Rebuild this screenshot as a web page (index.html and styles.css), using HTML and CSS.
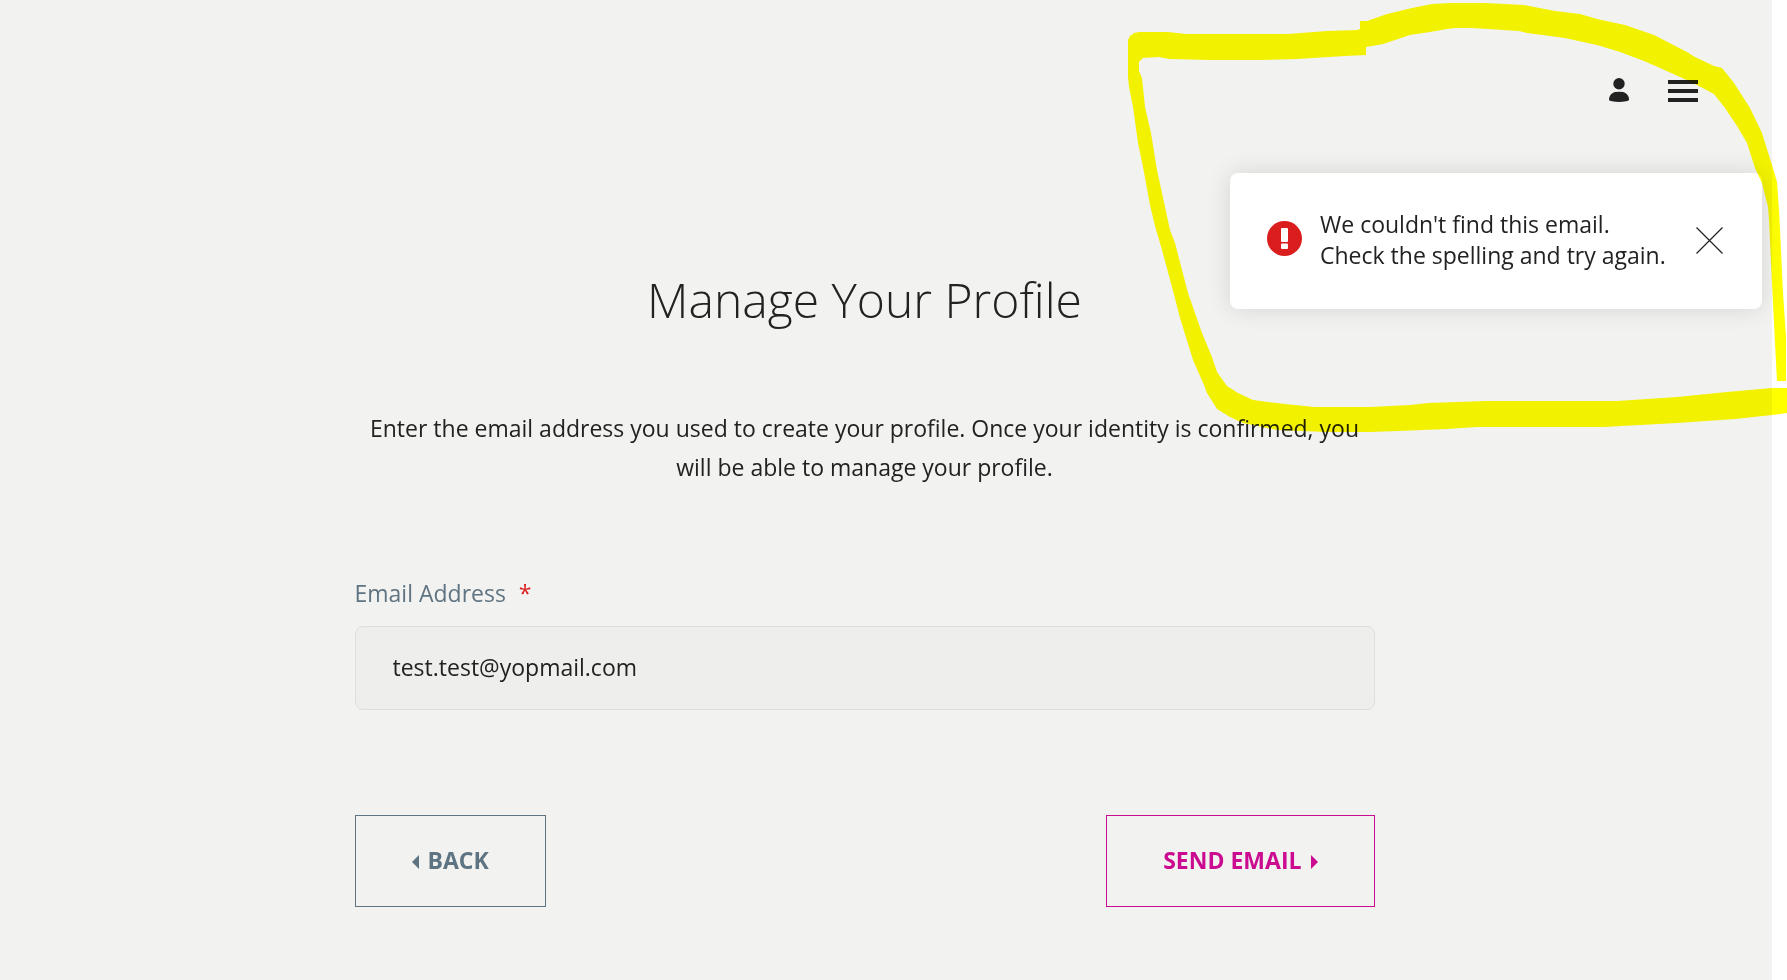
FILE: index.html
```html
<!DOCTYPE html>
<html lang="en">
<head>
<meta charset="utf-8">
<title>Manage Your Profile</title>
<link rel="stylesheet" href="styles.css">
</head>
<body>
<div class="page">
  <header class="header">
    <button class="icon-button" type="button" aria-label="Account">
      <svg width="20" height="24" viewBox="0 0 20 24"><circle cx="10" cy="5.700" r="5.700"/><path d="M6 14 Q10 13.700 14 14 C18 15 20 18.500 20 21.500 C20 22.600 18.500 23 17 23.300 Q10 24.600 3 23.300 C1.500 23 0 22.600 0 21.500 C0 18.500 2 15 6 14Z"/></svg>
    </button>
    <button class="icon-button" type="button" aria-label="Menu">
      <svg width="30" height="22" viewBox="0 0 30 22"><path d="M0 0h30v4H0zM0 9h30v4H0zM0 18h30v4H0z"/></svg>
    </button>
  </header>

  <main class="main">
    <h1 class="title">Manage Your Profile</h1>
    <p class="intro">Enter the email address you used to create your profile. Once your identity is confirmed, you will be able to manage your profile.</p>
    <form class="form">
      <label class="label" for="email">Email Address <span class="required">*</span></label>
      <input class="input" id="email" type="email" value="test.test@yopmail.com" required>
      <div class="actions">
        <button class="button" type="button">
          <svg class="arrow" width="7" height="14" viewBox="0 0 7 14"><path d="M7 0v14L0 7z"/></svg>
          BACK
        </button>
        <button class="button button-primary" type="submit">
          SEND EMAIL
          <svg class="arrow" width="7" height="14" viewBox="0 0 7 14"><path d="M0 0v14l7-7z"/></svg>
        </button>
      </div>
    </form>
  </main>

  <div class="toast" role="alert">
    <svg class="toast-icon" width="35" height="35" viewBox="0 0 35 35"><circle cx="17.500" cy="17.500" r="17.500" fill="#da1e1e"/><rect x="14" y="7" width="7" height="14" rx="1" fill="#fff"/><rect x="14" y="22.500" width="7" height="5.500" rx="1" fill="#fff"/></svg>
    <p class="toast-text">We couldn't find this email.<br>Check the spelling and try again.</p>
    <button class="icon-button toast-close" type="button" aria-label="Close">
      <svg width="27" height="27" viewBox="0 0 27 27"><path d="M.5.5l26 26M26.500.5l-26 26" fill="none" stroke="#222" stroke-width="1.200"/></svg>
    </button>
  </div>
</div>

<svg class="marker" width="659" height="440" viewBox="1128 0 659 440" aria-hidden="true"><path d="M1128 40L1130 36L1134 33L1139 32L1168 32L1186 34L1288 34L1327 31L1357 30L1360 29V21H1367L1387 14L1412 8L1432 4L1450 3L1485 3L1524 5L1555 11L1580 14L1597 19L1625 25L1654 35L1687 52L1695 57L1714 66L1722 68L1734 83L1750 108L1762 133L1772 165L1777 182L1779 210L1780 230L1783 293L1786 337V381H1777L1775 343L1772 283L1769 220L1768 207L1762 183L1755 168L1747 143L1737 126L1725 108L1714 94L1697 85L1680 77L1660 68L1644 61L1620 52L1597 45L1565 38L1527 33L1519 31L1472 28H1455L1447 29L1430 32L1410 35L1383 44L1372 46L1366 47V55L1345 56L1297 59L1257 60H1211L1169 59L1159 57L1143 58L1139 62V71L1142 78L1145 107L1151 133L1157 170L1170 230L1175 243L1188 293L1202 333L1212 357L1217 372L1227 386L1238 393L1253 400L1285 404L1314 407H1370L1410 405L1428 403L1486 401H1617L1677 397L1727 392L1772 388H1787V413L1772 415L1735 419L1677 423L1604 427H1477L1447 429L1398 431L1370 432H1327L1277 430L1243 423L1230 417L1217 409L1207 393L1204 385L1193 360L1180 318L1172 287L1162 250L1155 226L1150 205L1143 167L1138 143L1133 107L1129 87L1128 77Z" fill="#ff0"/></svg>
</body>
</html>
```
FILE: styles.css
```css
* {
  box-sizing: border-box;
}

body {
  margin: 0;
  padding-right: 15px;
  position: relative;
  background: #fff;
  color: #222;
  font-family: "Open Sans", "Noto Sans", sans-serif;
  font-size: 23px;
  font-variant-ligatures: none;
}

.page {
  position: relative;
  min-height: 100vh;
  background: #f2f2f0;
}

.header {
  display: flex;
  justify-content: flex-end;
  align-items: flex-end;
  gap: 39px;
  padding: 78px 74px 0 0;
}

.icon-button {
  display: flex;
  padding: 0;
  border: 0;
  background: none;
  color: inherit;
  fill: currentColor;
  cursor: pointer;
}

.main {
  max-width: 1063px;
  margin: 0 auto;
  padding: 163px 43px 72px 0;
}

.title {
  margin: 0;
  font-size: 48px;
  font-weight: 300;
  line-height: 70px;
  text-align: center;
}

.intro {
  margin: 74px 0 0;
  line-height: 39px;
  text-align: center;
}

.form {
  display: flex;
  flex-direction: column;
  margin-top: 89px;
}

.label {
  margin-bottom: 16px;
  color: #5f7482;
  line-height: 34px;
}

.required {
  margin-left: 7px;
  color: #da1e1e;
}

.input {
  width: 100%;
  height: 84px;
  padding: 0 37px 2px;
  border: 1px solid #dededc;
  border-radius: 8px;
  background: #eeeeec;
  color: #222;
  font: inherit;
}

.actions {
  display: flex;
  justify-content: space-between;
  margin-top: 105px;
}

.button {
  display: flex;
  align-items: center;
  gap: 9px;
  height: 92px;
  padding: 0 56px 2px;
  border: 1px solid currentColor;
  background: none;
  color: #5f7482;
  font: inherit;
  font-weight: 700;
  fill: currentColor;
  cursor: pointer;
}

.button-primary {
  color: #cc0c90;
}

.arrow {
  margin-top: 4px;
}

.toast {
  position: absolute;
  top: 173px;
  right: 10px;
  display: flex;
  align-items: center;
  width: 532px;
  padding: 36px 39px 38px 37px;
  border-radius: 8px;
  background: #fff;
  box-shadow: 0 0 24px rgba(0, 0, 0, 0.12);
}

.toast-icon {
  flex: none;
  margin: 0 18px 4px 0;
}

.toast-text {
  margin: 0;
  line-height: 31px;
  white-space: nowrap;
}

.toast-close {
  margin-left: auto;
}

.marker {
  position: absolute;
  top: 0;
  right: 0;
  mix-blend-mode: multiply;
  pointer-events: none;
}
```
